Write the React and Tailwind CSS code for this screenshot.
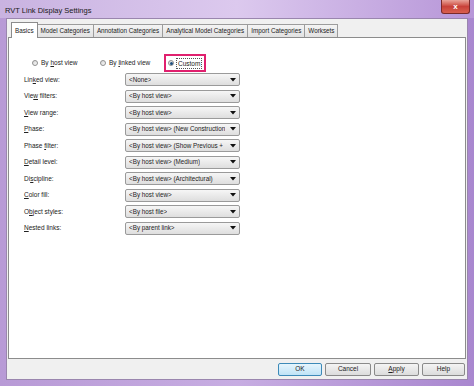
import React from "react";

const font = { fontFamily: '"Liberation Sans", Arial, sans-serif' };

const tabs = [
  "Model Categories",
  "Annotation Categories",
  "Analytical Model Categories",
  "Import Categories",
  "Worksets",
];

const rows = [
  { label: <>Lin<u>k</u>ed view:</>, value: "<None>" },
  { label: <>Vie<u>w</u> filters:</>, value: "<By host view>" },
  { label: <><u>V</u>iew range:</>, value: "<By host view>" },
  { label: <><u>P</u>hase:</>, value: "<By host view> (New Construction" },
  { label: <>Phase <u>f</u>ilter:</>, value: "<By host view> (Show Previous +" },
  { label: <><u>D</u>etail level:</>, value: "<By host view> (Medium)" },
  { label: <>Di<u>s</u>cipline:</>, value: "<By host view> (Architectural)" },
  { label: <><u>C</u>olor fill:</>, value: "<By host view>" },
  { label: <>O<u>b</u>ject styles:</>, value: "<By host file>" },
  { label: <><u>N</u>ested links:</>, value: "<By parent link>" },
];

const Radio = ({ checked }) => (
  <span className="w-[6px] h-[6px] rounded-full border border-[#8f8f8f] bg-gradient-to-br from-[#d8d8d8] to-[#f8f8f8] flex items-center justify-center">
    {checked && <span className="w-[3px] h-[3px] rounded-full bg-[#1e4f7d]"></span>}
  </span>
);

const Select = ({ value }) => (
  <div className="w-[115px] h-[13px] border border-[#9a9a9a] rounded-[2px] bg-gradient-to-b from-[#f6f6f6] to-[#dedede] flex items-center justify-between pl-[3px] pr-[3px]">
    <span className="text-[6.3px] text-[#222] whitespace-nowrap overflow-hidden">{value}</span>
    <svg width="6" height="4" viewBox="0 0 6 4" className="shrink-0 ml-[2px]">
      <path d="M0 0 L6 0 L3 3.5 Z" fill="#111" />
    </svg>
  </div>
);

const Button = ({ children, primary, w }) => (
  <button
    className={`h-[13px] rounded-[2px] border text-[6.5px] text-[#222] flex items-center justify-center ${w} ${
      primary
        ? "border-[#3d8ab8] bg-gradient-to-b from-[#e6f5fd] to-[#bfe3f6]"
        : "border-[#8a8a8a] bg-gradient-to-b from-[#f4f4f4] to-[#dcdcdc]"
    }`}
  >
    {children}
  </button>
);

const App = () => {
  return (
    <div
      className="w-[474px] h-[386px] flex flex-col bg-gradient-to-r from-[#b89ad6] via-[#c7ade2] to-[#a987cf] overflow-hidden"
      style={font}
    >
      {/* title bar */}
      <div className="h-[18px] flex justify-between items-start pl-[5px] pr-[4px] bg-gradient-to-r from-[#c9b3e1] via-[#dcc9ee] to-[#b796d8]">
        <span className="text-[7.5px] text-[#1a1a1a] mt-[5px]">RVT Link Display Settings</span>
        <div className="w-[29px] h-[14px] rounded-b-[3px] border border-t-0 border-[#7a2a2a] bg-gradient-to-b from-[#e8a39a] via-[#c8413a] to-[#d9604f] flex items-center justify-center">
          <span className="text-[8px] font-bold text-white leading-none">x</span>
        </div>
      </div>

      {/* dialog body */}
      <div className="flex-1 mx-[6px] mb-[6px] bg-[#f0f0f0] border border-[#9a86ae] flex flex-col pl-[1px] pr-[1px]">
        {/* tabs */}
        <div className="flex items-end h-[18px] pl-[3px] pt-[2px]">
          <div className="h-[16px] px-[3px] bg-white border border-b-0 border-[#8c8c8c] text-[6.3px] text-[#222] flex items-start pt-[3px] -mb-[1px] relative z-10">
            Basics
          </div>
          {tabs.map((t) => (
            <div
              key={t}
              className="h-[13px] px-[3px] border border-b-0 border-l-0 border-[#9c9c9c] bg-gradient-to-b from-[#f4f4f4] to-[#e2e2e2] text-[6.3px] text-[#222] flex items-center"
            >
              {t}
            </div>
          ))}
        </div>

        {/* panel */}
        <div className="h-[322px] bg-white border border-[#8c8c8c] flex flex-col pl-[15px] pt-[16px]">
          <div className="flex items-center h-[18px] text-[6.5px] text-[#222]">
            <div className="flex items-center gap-[3px] ml-[8px] w-[68px]">
              <Radio />
              <span>By <u>h</u>ost view</span>
            </div>
            <div className="flex items-center gap-[3px] w-[64px]">
              <Radio />
              <span>By <u>l</u>inked view</span>
            </div>
            <div className="h-[18px] w-[42px] border-2 border-[#e0206e] flex items-center pl-[2px] gap-[2px]">
              <Radio checked />
              <span className="border border-dotted border-[#555] px-[1px] leading-[9px]">Custom</span>
            </div>
          </div>

          <div className="flex flex-col gap-[3.5px] mt-[1px]">
            {rows.map((r, i) => (
              <div key={i} className="flex items-center">
                <span className="w-[101px] text-[6.5px] text-[#222]">{r.label}</span>
                <Select value={r.value} />
              </div>
            ))}
          </div>
        </div>

        {/* buttons */}
        <div className="flex-1 flex items-center justify-end gap-[3px] pr-[1px]">
          <Button primary w="w-[44px]">OK</Button>
          <Button w="w-[46px]">Cancel</Button>
          <Button w="w-[45px]"><span><u>A</u>pply</span></Button>
          <Button w="w-[43px]">Help</Button>
        </div>
      </div>
    </div>
  );
};

export default App;
